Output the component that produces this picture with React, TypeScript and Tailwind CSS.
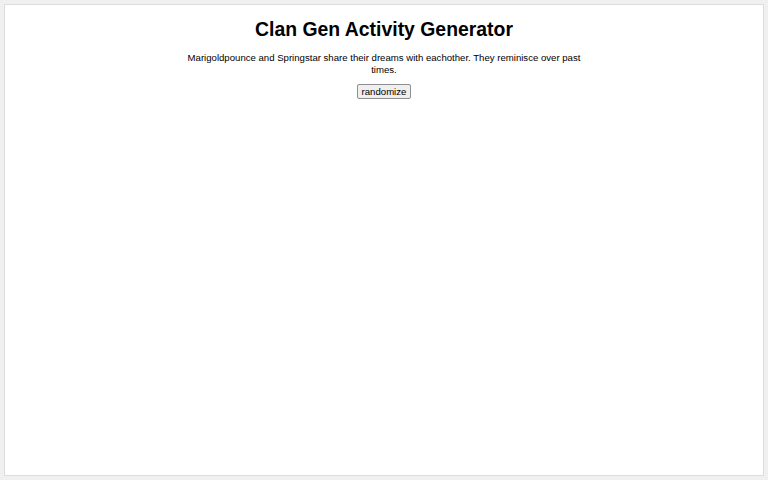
import * as React from "react";
import {useState} from "react";

const events = [
  "Marigoldpounce and Springstar share their dreams with eachother. They reminisce over past times.",
];

export default function App() {
  const [text, setText] = useState(events[0])

  const onRandomize = () => {
    setText(events[Math.floor(Math.random() * events.length)])
  }

  return (
      <div className="h-[480px] w-[768px] bg-[#f0f0f0] p-1 font-['Liberation_Sans',Arial,sans-serif]">
        <div className="flex h-full flex-col items-center border border-[#dcdcdc] bg-white">
          <h1 className="mt-[12px] text-[19.4px] font-bold leading-[24px] text-black">
            Clan Gen Activity Generator
          </h1>
          <p className="mt-[11px] w-[400px] text-center text-[9.6px] leading-[11.5px] text-black">
            {text}
          </p>
          <button
              onClick={onRandomize}
              className="mt-[9px] h-[15px] rounded-[2px] border border-[#8f8f8f] bg-[#efefef] px-[4px] text-[9.6px] leading-[12px] text-black"
          >
            randomize
          </button>
        </div>
      </div>
  );
}
